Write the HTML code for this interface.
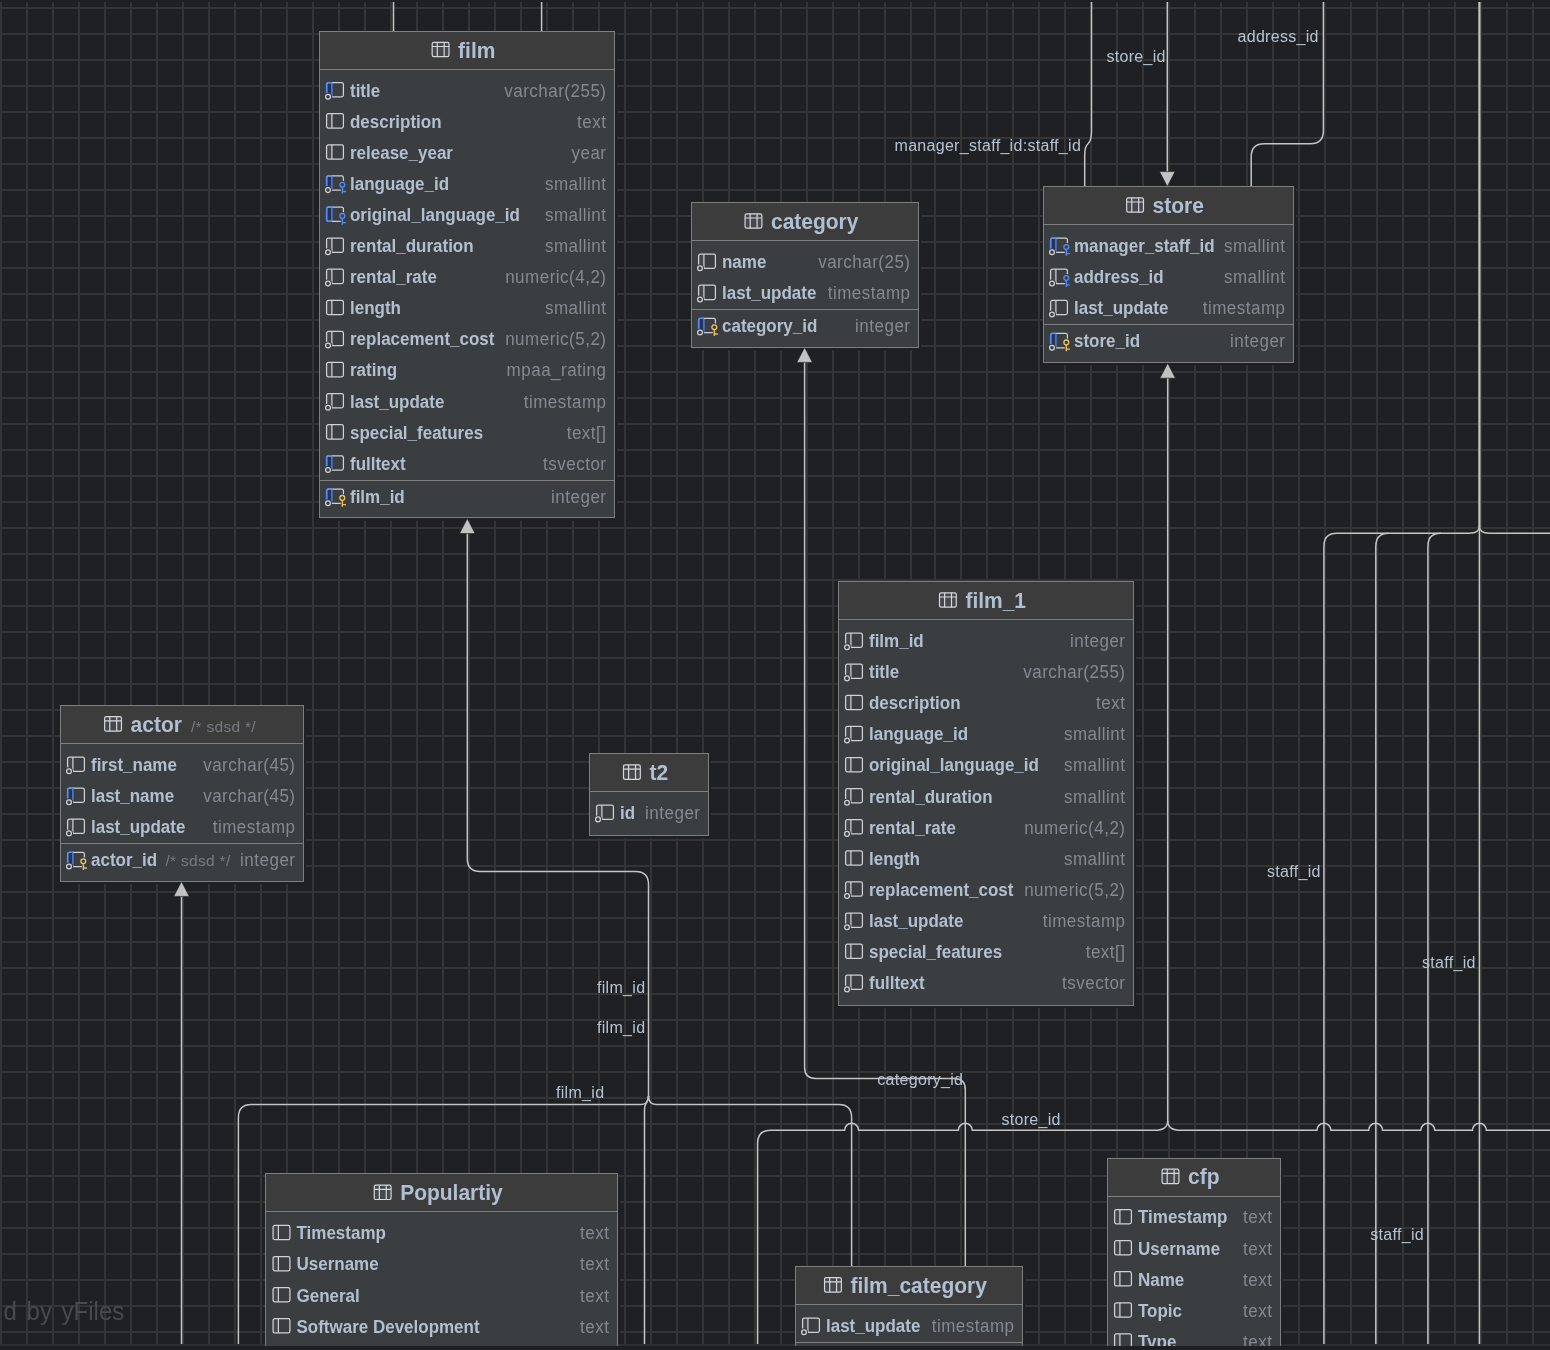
<!DOCTYPE html><html><head><meta charset="utf-8"><style>html,body{margin:0;padding:0;width:1550px;height:1350px;overflow:hidden;background:#1e1f22;}svg{position:absolute;left:0;top:0;display:block;will-change:transform}text{font-family:"Liberation Sans",sans-serif;}.nm{font-weight:bold;font-size:17px;fill:#b3bfcf}.ty{font-size:17px;fill:#858990;letter-spacing:0.5px}.ti{font-weight:bold;font-size:21px;fill:#b0c0d2}.cm{font-size:15.5px;fill:#777b81;letter-spacing:0.3px}.lb{font-size:16px;fill:#b7c2d0;letter-spacing:0.3px}.wm{font-size:24px;fill:#4a4a4c;letter-spacing:0px}</style></head><body>
<svg width="1550" height="1350" viewBox="0 0 1550 1350">
<defs>
<clipPath id="cv"><rect x="0" y="0" width="1550" height="1344"/></clipPath>
<clipPath id="cv2"><rect x="0" y="0" width="1550" height="1346"/></clipPath>
</defs>
<rect x="0" y="0" width="1550" height="1350" fill="#1e1f22"/>
<rect x="0" y="0" width="1550" height="1344" fill="#1f2023"/>
<rect x="0" y="1344" width="1550" height="2" fill="#2b2d30"/>
<g clip-path="url(#cv)">
<g fill="#343435"><rect x="0" y="2" width="2" height="1342"/><rect x="26" y="2" width="2" height="1342"/><rect x="52" y="2" width="2" height="1342"/><rect x="78" y="2" width="2" height="1342"/><rect x="104" y="2" width="2" height="1342"/><rect x="130" y="2" width="2" height="1342"/><rect x="156" y="2" width="2" height="1342"/><rect x="182" y="2" width="2" height="1342"/><rect x="208" y="2" width="2" height="1342"/><rect x="234" y="2" width="2" height="1342"/><rect x="260" y="2" width="2" height="1342"/><rect x="286" y="2" width="2" height="1342"/><rect x="312" y="2" width="2" height="1342"/><rect x="338" y="2" width="2" height="1342"/><rect x="364" y="2" width="2" height="1342"/><rect x="390" y="2" width="2" height="1342"/><rect x="416" y="2" width="2" height="1342"/><rect x="442" y="2" width="2" height="1342"/><rect x="468" y="2" width="2" height="1342"/><rect x="494" y="2" width="2" height="1342"/><rect x="520" y="2" width="2" height="1342"/><rect x="546" y="2" width="2" height="1342"/><rect x="572" y="2" width="2" height="1342"/><rect x="598" y="2" width="2" height="1342"/><rect x="624" y="2" width="2" height="1342"/><rect x="650" y="2" width="2" height="1342"/><rect x="676" y="2" width="2" height="1342"/><rect x="702" y="2" width="2" height="1342"/><rect x="728" y="2" width="2" height="1342"/><rect x="754" y="2" width="2" height="1342"/><rect x="780" y="2" width="2" height="1342"/><rect x="806" y="2" width="2" height="1342"/><rect x="832" y="2" width="2" height="1342"/><rect x="858" y="2" width="2" height="1342"/><rect x="884" y="2" width="2" height="1342"/><rect x="910" y="2" width="2" height="1342"/><rect x="934" y="2" width="2" height="1342"/><rect x="960" y="2" width="2" height="1342"/><rect x="986" y="2" width="2" height="1342"/><rect x="1012" y="2" width="2" height="1342"/><rect x="1038" y="2" width="2" height="1342"/><rect x="1064" y="2" width="2" height="1342"/><rect x="1090" y="2" width="2" height="1342"/><rect x="1116" y="2" width="2" height="1342"/><rect x="1142" y="2" width="2" height="1342"/><rect x="1168" y="2" width="2" height="1342"/><rect x="1194" y="2" width="2" height="1342"/><rect x="1220" y="2" width="2" height="1342"/><rect x="1246" y="2" width="2" height="1342"/><rect x="1272" y="2" width="2" height="1342"/><rect x="1298" y="2" width="2" height="1342"/><rect x="1324" y="2" width="2" height="1342"/><rect x="1350" y="2" width="2" height="1342"/><rect x="1376" y="2" width="2" height="1342"/><rect x="1402" y="2" width="2" height="1342"/><rect x="1428" y="2" width="2" height="1342"/><rect x="1454" y="2" width="2" height="1342"/><rect x="1480" y="2" width="2" height="1342"/><rect x="1506" y="2" width="2" height="1342"/><rect x="1532" y="2" width="2" height="1342"/><rect x="0" y="7" width="1550" height="2"/><rect x="0" y="33" width="1550" height="2"/><rect x="0" y="59" width="1550" height="2"/><rect x="0" y="85" width="1550" height="2"/><rect x="0" y="111" width="1550" height="2"/><rect x="0" y="137" width="1550" height="2"/><rect x="0" y="163" width="1550" height="2"/><rect x="0" y="189" width="1550" height="2"/><rect x="0" y="215" width="1550" height="2"/><rect x="0" y="241" width="1550" height="2"/><rect x="0" y="267" width="1550" height="2"/><rect x="0" y="293" width="1550" height="2"/><rect x="0" y="319" width="1550" height="2"/><rect x="0" y="345" width="1550" height="2"/><rect x="0" y="371" width="1550" height="2"/><rect x="0" y="397" width="1550" height="2"/><rect x="0" y="423" width="1550" height="2"/><rect x="0" y="449" width="1550" height="2"/><rect x="0" y="475" width="1550" height="2"/><rect x="0" y="501" width="1550" height="2"/><rect x="0" y="527" width="1550" height="2"/><rect x="0" y="553" width="1550" height="2"/><rect x="0" y="579" width="1550" height="2"/><rect x="0" y="605" width="1550" height="2"/><rect x="0" y="631" width="1550" height="2"/><rect x="0" y="657" width="1550" height="2"/><rect x="0" y="683" width="1550" height="2"/><rect x="0" y="709" width="1550" height="2"/><rect x="0" y="735" width="1550" height="2"/><rect x="0" y="761" width="1550" height="2"/><rect x="0" y="787" width="1550" height="2"/><rect x="0" y="813" width="1550" height="2"/><rect x="0" y="839" width="1550" height="2"/><rect x="0" y="865" width="1550" height="2"/><rect x="0" y="891" width="1550" height="2"/><rect x="0" y="917" width="1550" height="2"/><rect x="0" y="941" width="1550" height="2"/><rect x="0" y="967" width="1550" height="2"/><rect x="0" y="993" width="1550" height="2"/><rect x="0" y="1019" width="1550" height="2"/><rect x="0" y="1045" width="1550" height="2"/><rect x="0" y="1071" width="1550" height="2"/><rect x="0" y="1097" width="1550" height="2"/><rect x="0" y="1123" width="1550" height="2"/><rect x="0" y="1149" width="1550" height="2"/><rect x="0" y="1175" width="1550" height="2"/><rect x="0" y="1201" width="1550" height="2"/><rect x="0" y="1227" width="1550" height="2"/><rect x="0" y="1253" width="1550" height="2"/><rect x="0" y="1279" width="1550" height="2"/><rect x="0" y="1305" width="1550" height="2"/><rect x="0" y="1331" width="1550" height="2"/></g>
<rect x="322.0" y="34.0" width="295.0" height="486.8" fill="#1f2023"/>
<rect x="694.0" y="205.5" width="227.0" height="144.7" fill="#1f2023"/>
<rect x="1046.0" y="189.5" width="250.0" height="175.8" fill="#1f2023"/>
<rect x="841.0" y="584.5" width="295.0" height="423.6" fill="#1f2023"/>
<rect x="63.0" y="708.4" width="243.0" height="175.8" fill="#1f2023"/>
<rect x="592.0" y="756.6" width="119.0" height="81.5" fill="#1f2023"/>
<rect x="268.5" y="1176.8" width="351.5" height="174.8" fill="#1f2023"/>
<rect x="798.0" y="1269.4" width="227.0" height="113.6" fill="#1f2023"/>
<rect x="1110.0" y="1160.9" width="173.0" height="205.9" fill="#1f2023"/>
<g><path d="M393.5 2 V31.5" fill="none" stroke="#c4c4c4" stroke-width="1.5"/><path d="M541.6 2 V31.5" fill="none" stroke="#c4c4c4" stroke-width="1.5"/><path d="M467.3 533 V858.4 Q467.3 871.4 480.3 871.4 H635.5 Q648.5 871.4 648.5 884.4 V1097" fill="none" stroke="#c4c4c4" stroke-width="1.5"/><path d="M648.5 1096 C648.5 1101.5 646 1104.4 641.5 1104.4 H251.4 Q238.4 1104.4 238.4 1117.4 V1344" fill="none" stroke="#c4c4c4" stroke-width="1.5"/><path d="M648.5 1096 C648.5 1101.5 651.6 1104.4 656.1 1104.4 H838.6 Q851.6 1104.4 851.6 1117.4 V1266.5" fill="none" stroke="#c4c4c4" stroke-width="1.5"/><path d="M648.5 1096 C648.5 1101.5 644.5 1103.5 644.5 1109 V1344" fill="none" stroke="#c4c4c4" stroke-width="1.5"/><path d="M467.30 518.60 L459.50 533.60 L475.10 533.60 Z" fill="#c2c2c2" stroke="#18191b" stroke-width="0.6"/><path d="M181.5 896 V1344" fill="none" stroke="#c4c4c4" stroke-width="1.5"/><path d="M181.50 881.40 L173.70 896.40 L189.30 896.40 Z" fill="#c2c2c2" stroke="#18191b" stroke-width="0.6"/><path d="M804.6 361.5 V1067.5 Q804.6 1078.5 815.6 1078.5 H954.3 Q965.3 1078.5 965.3 1089.5 V1266.5" fill="none" stroke="#c4c4c4" stroke-width="1.5"/><path d="M804.60 347.40 L796.80 362.40 L812.40 362.40 Z" fill="#c2c2c2" stroke="#18191b" stroke-width="0.6"/><path d="M1091.5 2 V131 C1091.5 139 1090.5 141.5 1088.2 143.5 C1085.6 145.6 1084.7 148 1084.7 155 V186.5" fill="none" stroke="#c4c4c4" stroke-width="1.5"/><path d="M1167.3 2 V172" fill="none" stroke="#c4c4c4" stroke-width="1.5"/><path d="M1167.30 186.60 L1159.50 171.60 L1175.10 171.60 Z" fill="#c2c2c2" stroke="#18191b" stroke-width="0.6"/><path d="M1323.4 2 V130.7 Q1323.4 143.7 1310.4 143.7 H1264.2 Q1251.2 143.7 1251.2 156.7 V186.5" fill="none" stroke="#c4c4c4" stroke-width="1.5"/><path d="M1167.7 377 V1122" fill="none" stroke="#c4c4c4" stroke-width="1.5"/><path d="M1167.7 1121 C1167.7 1127.5 1162 1130.3 1154.5 1130.3 H972.30 A7 7 0 0 0 958.30 1130.30 H858.60 A7 7 0 0 0 844.60 1130.30 H770.6 Q757.6 1130.3 757.6 1143.3 V1344" fill="none" stroke="#c4c4c4" stroke-width="1.5"/><path d="M1167.7 1121 C1167.7 1127.5 1173.4 1130.3 1180.9 1130.3 H1316.90 A7 7 0 0 1 1330.90 1130.30 H1368.60 A7 7 0 0 1 1382.60 1130.30 H1420.80 A7 7 0 0 1 1434.80 1130.30 H1472.40 A7 7 0 0 1 1486.40 1130.30 H1552" fill="none" stroke="#c4c4c4" stroke-width="1.5"/><path d="M1167.70 363.20 L1159.90 378.20 L1175.50 378.20 Z" fill="#c2c2c2" stroke="#18191b" stroke-width="0.6"/><path d="M1479.4 2 V527" fill="none" stroke="#c4c4c4" stroke-width="2.2"/><path d="M1479.4 526 C1479.4 531 1476 533.2 1469.5 533.2 H1336.9 Q1323.9 533.2 1323.9 546.2 V1344" fill="none" stroke="#c4c4c4" stroke-width="1.5"/><path d="M1388.8 533.2 Q1375.8 533.2 1375.8 546.2 V1344" fill="none" stroke="#c4c4c4" stroke-width="1.5"/><path d="M1440.9 533.2 Q1427.9 533.2 1427.9 546.2 V1344" fill="none" stroke="#c4c4c4" stroke-width="1.5"/><path d="M1479.4 526 C1479.4 531 1482.8 533.2 1489.3 533.2 H1552" fill="none" stroke="#c4c4c4" stroke-width="1.5"/><path d="M1479.4 526 V1344" fill="none" stroke="#c4c4c4" stroke-width="1.5"/></g>
</g><g clip-path="url(#cv2)"><rect x="319.00" y="31.00" width="295.00" height="486.80" fill="#3b3e41"/><rect x="319.00" y="31.00" width="295.00" height="38.00" fill="#3c3c3d"/><rect x="319.5" y="31.5" width="295" height="486" fill="none" stroke="#7e7e7e" stroke-width="1"/><path d="M319 69.5 H614" stroke="#7e7e7e" stroke-width="1"/><path d="M319 480.5 H614" stroke="#7e7e7e" stroke-width="1"/><g transform="translate(431.58 41.70)"><rect x="0.6" y="0.6" width="16.8" height="14.4" rx="1.6" fill="#46484c" stroke="#d6d7dc" stroke-width="1.2"/><path d="M0.6 4.8 H17.4 M5.7 0.6 V15 M12.6 0.6 V15" stroke="#d6d7dc" stroke-width="1.2"/></g><text class="ti" transform="translate(458.08 57.50) scale(1 1.04)">film</text><g transform="translate(326.00 82.00)"><rect x="0.8" y="0.8" width="4.9" height="13.8" fill="#243358"/><rect x="0.6" y="0.6" width="16.8" height="14.3" rx="1.8" fill="none" stroke="#d0d1d4" stroke-width="1.25"/><path d="M5.9 0.6 V14.9" stroke="#548cf8" stroke-width="1.25"/><path d="M5.9 0.6 H2.4 Q0.6 0.6 0.6 2.4 V13.1 Q0.6 14.9 2.4 14.9 H5.9" fill="none" stroke="#548cf8" stroke-width="1.4"/><circle cx="2" cy="14.8" r="2.6" fill="#3b3e41" stroke="#3b3e41" stroke-width="2.8"/><circle cx="2" cy="14.8" r="2.4" fill="none" stroke="#d0d1d4" stroke-width="1.25"/></g><text class="nm" transform="translate(350.00 96.50) scale(1 1.06)">title</text><text class="ty" text-anchor="end" transform="translate(606.50 96.50) scale(1 1.06)">varchar(255)</text><g transform="translate(326.00 113.10)"><rect x="0.8" y="0.8" width="4.9" height="13.8" fill="#45464a"/><rect x="0.6" y="0.6" width="16.8" height="14.3" rx="1.8" fill="none" stroke="#d0d1d4" stroke-width="1.25"/><path d="M5.9 0.6 V14.9" stroke="#d0d1d4" stroke-width="1.25"/></g><text class="nm" transform="translate(350.00 127.60) scale(1 1.06)">description</text><text class="ty" text-anchor="end" transform="translate(606.50 127.60) scale(1 1.06)">text</text><g transform="translate(326.00 144.20)"><rect x="0.8" y="0.8" width="4.9" height="13.8" fill="#45464a"/><rect x="0.6" y="0.6" width="16.8" height="14.3" rx="1.8" fill="none" stroke="#d0d1d4" stroke-width="1.25"/><path d="M5.9 0.6 V14.9" stroke="#d0d1d4" stroke-width="1.25"/></g><text class="nm" transform="translate(350.00 158.70) scale(1 1.06)">release_year</text><text class="ty" text-anchor="end" transform="translate(606.50 158.70) scale(1 1.06)">year</text><g transform="translate(326.00 175.30)"><rect x="0.8" y="0.8" width="4.9" height="13.8" fill="#243358"/><rect x="0.6" y="0.6" width="16.8" height="14.3" rx="1.8" fill="none" stroke="#d0d1d4" stroke-width="1.25"/><path d="M5.9 0.6 V14.9" stroke="#548cf8" stroke-width="1.25"/><path d="M5.9 0.6 H2.4 Q0.6 0.6 0.6 2.4 V13.1 Q0.6 14.9 2.4 14.9 H5.9" fill="none" stroke="#548cf8" stroke-width="1.4"/><g stroke="#3b3e41" stroke-width="3" fill="#3b3e41"><circle cx="16.3" cy="9.5" r="2.5"/><path d="M16.3 12 V18.3 M16.3 16.2 H19.9"/></g><g stroke="#548cf8" stroke-width="1.3" fill="none"><circle cx="16.3" cy="9.5" r="2.4"/><path d="M16.3 11.9 V18.3 M16.3 16.2 H19.9"/></g><circle cx="2" cy="14.8" r="2.6" fill="#3b3e41" stroke="#3b3e41" stroke-width="2.8"/><circle cx="2" cy="14.8" r="2.4" fill="none" stroke="#d0d1d4" stroke-width="1.25"/></g><text class="nm" transform="translate(350.00 189.80) scale(1 1.06)">language_id</text><text class="ty" text-anchor="end" transform="translate(606.50 189.80) scale(1 1.06)">smallint</text><g transform="translate(326.00 206.40)"><rect x="0.8" y="0.8" width="4.9" height="13.8" fill="#243358"/><rect x="0.6" y="0.6" width="16.8" height="14.3" rx="1.8" fill="none" stroke="#d0d1d4" stroke-width="1.25"/><path d="M5.9 0.6 V14.9" stroke="#548cf8" stroke-width="1.25"/><path d="M5.9 0.6 H2.4 Q0.6 0.6 0.6 2.4 V13.1 Q0.6 14.9 2.4 14.9 H5.9" fill="none" stroke="#548cf8" stroke-width="1.4"/><g stroke="#3b3e41" stroke-width="3" fill="#3b3e41"><circle cx="16.3" cy="9.5" r="2.5"/><path d="M16.3 12 V18.3 M16.3 16.2 H19.9"/></g><g stroke="#548cf8" stroke-width="1.3" fill="none"><circle cx="16.3" cy="9.5" r="2.4"/><path d="M16.3 11.9 V18.3 M16.3 16.2 H19.9"/></g></g><text class="nm" transform="translate(350.00 220.90) scale(1 1.06)">original_language_id</text><text class="ty" text-anchor="end" transform="translate(606.50 220.90) scale(1 1.06)">smallint</text><g transform="translate(326.00 237.50)"><rect x="0.8" y="0.8" width="4.9" height="13.8" fill="#45464a"/><rect x="0.6" y="0.6" width="16.8" height="14.3" rx="1.8" fill="none" stroke="#d0d1d4" stroke-width="1.25"/><path d="M5.9 0.6 V14.9" stroke="#d0d1d4" stroke-width="1.25"/><circle cx="2" cy="14.8" r="2.6" fill="#3b3e41" stroke="#3b3e41" stroke-width="2.8"/><circle cx="2" cy="14.8" r="2.4" fill="none" stroke="#d0d1d4" stroke-width="1.25"/></g><text class="nm" transform="translate(350.00 252.00) scale(1 1.06)">rental_duration</text><text class="ty" text-anchor="end" transform="translate(606.50 252.00) scale(1 1.06)">smallint</text><g transform="translate(326.00 268.60)"><rect x="0.8" y="0.8" width="4.9" height="13.8" fill="#45464a"/><rect x="0.6" y="0.6" width="16.8" height="14.3" rx="1.8" fill="none" stroke="#d0d1d4" stroke-width="1.25"/><path d="M5.9 0.6 V14.9" stroke="#d0d1d4" stroke-width="1.25"/><circle cx="2" cy="14.8" r="2.6" fill="#3b3e41" stroke="#3b3e41" stroke-width="2.8"/><circle cx="2" cy="14.8" r="2.4" fill="none" stroke="#d0d1d4" stroke-width="1.25"/></g><text class="nm" transform="translate(350.00 283.10) scale(1 1.06)">rental_rate</text><text class="ty" text-anchor="end" transform="translate(606.50 283.10) scale(1 1.06)">numeric(4,2)</text><g transform="translate(326.00 299.70)"><rect x="0.8" y="0.8" width="4.9" height="13.8" fill="#45464a"/><rect x="0.6" y="0.6" width="16.8" height="14.3" rx="1.8" fill="none" stroke="#d0d1d4" stroke-width="1.25"/><path d="M5.9 0.6 V14.9" stroke="#d0d1d4" stroke-width="1.25"/></g><text class="nm" transform="translate(350.00 314.20) scale(1 1.06)">length</text><text class="ty" text-anchor="end" transform="translate(606.50 314.20) scale(1 1.06)">smallint</text><g transform="translate(326.00 330.80)"><rect x="0.8" y="0.8" width="4.9" height="13.8" fill="#45464a"/><rect x="0.6" y="0.6" width="16.8" height="14.3" rx="1.8" fill="none" stroke="#d0d1d4" stroke-width="1.25"/><path d="M5.9 0.6 V14.9" stroke="#d0d1d4" stroke-width="1.25"/><circle cx="2" cy="14.8" r="2.6" fill="#3b3e41" stroke="#3b3e41" stroke-width="2.8"/><circle cx="2" cy="14.8" r="2.4" fill="none" stroke="#d0d1d4" stroke-width="1.25"/></g><text class="nm" transform="translate(350.00 345.30) scale(1 1.06)">replacement_cost</text><text class="ty" text-anchor="end" transform="translate(606.50 345.30) scale(1 1.06)">numeric(5,2)</text><g transform="translate(326.00 361.90)"><rect x="0.8" y="0.8" width="4.9" height="13.8" fill="#45464a"/><rect x="0.6" y="0.6" width="16.8" height="14.3" rx="1.8" fill="none" stroke="#d0d1d4" stroke-width="1.25"/><path d="M5.9 0.6 V14.9" stroke="#d0d1d4" stroke-width="1.25"/></g><text class="nm" transform="translate(350.00 376.40) scale(1 1.06)">rating</text><text class="ty" text-anchor="end" transform="translate(606.50 376.40) scale(1 1.06)">mpaa_rating</text><g transform="translate(326.00 393.00)"><rect x="0.8" y="0.8" width="4.9" height="13.8" fill="#45464a"/><rect x="0.6" y="0.6" width="16.8" height="14.3" rx="1.8" fill="none" stroke="#d0d1d4" stroke-width="1.25"/><path d="M5.9 0.6 V14.9" stroke="#d0d1d4" stroke-width="1.25"/><circle cx="2" cy="14.8" r="2.6" fill="#3b3e41" stroke="#3b3e41" stroke-width="2.8"/><circle cx="2" cy="14.8" r="2.4" fill="none" stroke="#d0d1d4" stroke-width="1.25"/></g><text class="nm" transform="translate(350.00 407.50) scale(1 1.06)">last_update</text><text class="ty" text-anchor="end" transform="translate(606.50 407.50) scale(1 1.06)">timestamp</text><g transform="translate(326.00 424.10)"><rect x="0.8" y="0.8" width="4.9" height="13.8" fill="#45464a"/><rect x="0.6" y="0.6" width="16.8" height="14.3" rx="1.8" fill="none" stroke="#d0d1d4" stroke-width="1.25"/><path d="M5.9 0.6 V14.9" stroke="#d0d1d4" stroke-width="1.25"/></g><text class="nm" transform="translate(350.00 438.60) scale(1 1.06)">special_features</text><text class="ty" text-anchor="end" transform="translate(606.50 438.60) scale(1 1.06)">text[]</text><g transform="translate(326.00 455.20)"><rect x="0.8" y="0.8" width="4.9" height="13.8" fill="#243358"/><rect x="0.6" y="0.6" width="16.8" height="14.3" rx="1.8" fill="none" stroke="#d0d1d4" stroke-width="1.25"/><path d="M5.9 0.6 V14.9" stroke="#548cf8" stroke-width="1.25"/><path d="M5.9 0.6 H2.4 Q0.6 0.6 0.6 2.4 V13.1 Q0.6 14.9 2.4 14.9 H5.9" fill="none" stroke="#548cf8" stroke-width="1.4"/><circle cx="2" cy="14.8" r="2.6" fill="#3b3e41" stroke="#3b3e41" stroke-width="2.8"/><circle cx="2" cy="14.8" r="2.4" fill="none" stroke="#d0d1d4" stroke-width="1.25"/></g><text class="nm" transform="translate(350.00 469.70) scale(1 1.06)">fulltext</text><text class="ty" text-anchor="end" transform="translate(606.50 469.70) scale(1 1.06)">tsvector</text><g transform="translate(326.00 488.40)"><rect x="0.8" y="0.8" width="4.9" height="13.8" fill="#243358"/><rect x="0.6" y="0.6" width="16.8" height="14.3" rx="1.8" fill="none" stroke="#d0d1d4" stroke-width="1.25"/><path d="M5.9 0.6 V14.9" stroke="#548cf8" stroke-width="1.25"/><path d="M5.9 0.6 H2.4 Q0.6 0.6 0.6 2.4 V13.1 Q0.6 14.9 2.4 14.9 H5.9" fill="none" stroke="#548cf8" stroke-width="1.4"/><g stroke="#3b3e41" stroke-width="3" fill="#3b3e41"><circle cx="16.3" cy="9.5" r="2.5"/><path d="M16.3 12 V18.3 M16.3 16.2 H19.9"/></g><g stroke="#f1c45a" stroke-width="1.3" fill="none"><circle cx="16.3" cy="9.5" r="2.4"/><path d="M16.3 11.9 V18.3 M16.3 16.2 H19.9"/></g><circle cx="2" cy="14.8" r="2.6" fill="#3b3e41" stroke="#3b3e41" stroke-width="2.8"/><circle cx="2" cy="14.8" r="2.4" fill="none" stroke="#d0d1d4" stroke-width="1.25"/></g><text class="nm" transform="translate(350.00 502.90) scale(1 1.06)">film_id</text><text class="ty" text-anchor="end" transform="translate(606.50 502.90) scale(1 1.06)">integer</text><rect x="691.00" y="202.50" width="227.00" height="144.70" fill="#3b3e41"/><rect x="691.00" y="202.50" width="227.00" height="38.00" fill="#3c3c3d"/><rect x="691.5" y="202.5" width="227" height="145" fill="none" stroke="#7e7e7e" stroke-width="1"/><path d="M691 240.5 H918" stroke="#7e7e7e" stroke-width="1"/><path d="M691 309.5 H918" stroke="#7e7e7e" stroke-width="1"/><g transform="translate(744.48 213.20)"><rect x="0.6" y="0.6" width="16.8" height="14.4" rx="1.6" fill="#46484c" stroke="#d6d7dc" stroke-width="1.2"/><path d="M0.6 4.8 H17.4 M5.7 0.6 V15 M12.6 0.6 V15" stroke="#d6d7dc" stroke-width="1.2"/></g><text class="ti" transform="translate(770.98 229.00) scale(1 1.04)">category</text><g transform="translate(698.00 253.50)"><rect x="0.8" y="0.8" width="4.9" height="13.8" fill="#45464a"/><rect x="0.6" y="0.6" width="16.8" height="14.3" rx="1.8" fill="none" stroke="#d0d1d4" stroke-width="1.25"/><path d="M5.9 0.6 V14.9" stroke="#d0d1d4" stroke-width="1.25"/><circle cx="2" cy="14.8" r="2.6" fill="#3b3e41" stroke="#3b3e41" stroke-width="2.8"/><circle cx="2" cy="14.8" r="2.4" fill="none" stroke="#d0d1d4" stroke-width="1.25"/></g><text class="nm" transform="translate(722.00 268.00) scale(1 1.06)">name</text><text class="ty" text-anchor="end" transform="translate(910.50 268.00) scale(1 1.06)">varchar(25)</text><g transform="translate(698.00 284.60)"><rect x="0.8" y="0.8" width="4.9" height="13.8" fill="#45464a"/><rect x="0.6" y="0.6" width="16.8" height="14.3" rx="1.8" fill="none" stroke="#d0d1d4" stroke-width="1.25"/><path d="M5.9 0.6 V14.9" stroke="#d0d1d4" stroke-width="1.25"/><circle cx="2" cy="14.8" r="2.6" fill="#3b3e41" stroke="#3b3e41" stroke-width="2.8"/><circle cx="2" cy="14.8" r="2.4" fill="none" stroke="#d0d1d4" stroke-width="1.25"/></g><text class="nm" transform="translate(722.00 299.10) scale(1 1.06)">last_update</text><text class="ty" text-anchor="end" transform="translate(910.50 299.10) scale(1 1.06)">timestamp</text><g transform="translate(698.00 317.80)"><rect x="0.8" y="0.8" width="4.9" height="13.8" fill="#243358"/><rect x="0.6" y="0.6" width="16.8" height="14.3" rx="1.8" fill="none" stroke="#d0d1d4" stroke-width="1.25"/><path d="M5.9 0.6 V14.9" stroke="#548cf8" stroke-width="1.25"/><path d="M5.9 0.6 H2.4 Q0.6 0.6 0.6 2.4 V13.1 Q0.6 14.9 2.4 14.9 H5.9" fill="none" stroke="#548cf8" stroke-width="1.4"/><g stroke="#3b3e41" stroke-width="3" fill="#3b3e41"><circle cx="16.3" cy="9.5" r="2.5"/><path d="M16.3 12 V18.3 M16.3 16.2 H19.9"/></g><g stroke="#f1c45a" stroke-width="1.3" fill="none"><circle cx="16.3" cy="9.5" r="2.4"/><path d="M16.3 11.9 V18.3 M16.3 16.2 H19.9"/></g><circle cx="2" cy="14.8" r="2.6" fill="#3b3e41" stroke="#3b3e41" stroke-width="2.8"/><circle cx="2" cy="14.8" r="2.4" fill="none" stroke="#d0d1d4" stroke-width="1.25"/></g><text class="nm" transform="translate(722.00 332.30) scale(1 1.06)">category_id</text><text class="ty" text-anchor="end" transform="translate(910.50 332.30) scale(1 1.06)">integer</text><rect x="1043.00" y="186.50" width="250.00" height="175.80" fill="#3b3e41"/><rect x="1043.00" y="186.50" width="250.00" height="38.00" fill="#3c3c3d"/><rect x="1043.5" y="186.5" width="250" height="176" fill="none" stroke="#7e7e7e" stroke-width="1"/><path d="M1043 224.5 H1293" stroke="#7e7e7e" stroke-width="1"/><path d="M1043 324.5 H1293" stroke="#7e7e7e" stroke-width="1"/><g transform="translate(1126.07 197.20)"><rect x="0.6" y="0.6" width="16.8" height="14.4" rx="1.6" fill="#46484c" stroke="#d6d7dc" stroke-width="1.2"/><path d="M0.6 4.8 H17.4 M5.7 0.6 V15 M12.6 0.6 V15" stroke="#d6d7dc" stroke-width="1.2"/></g><text class="ti" transform="translate(1152.57 213.00) scale(1 1.04)">store</text><g transform="translate(1050.00 237.50)"><rect x="0.8" y="0.8" width="4.9" height="13.8" fill="#243358"/><rect x="0.6" y="0.6" width="16.8" height="14.3" rx="1.8" fill="none" stroke="#d0d1d4" stroke-width="1.25"/><path d="M5.9 0.6 V14.9" stroke="#548cf8" stroke-width="1.25"/><path d="M5.9 0.6 H2.4 Q0.6 0.6 0.6 2.4 V13.1 Q0.6 14.9 2.4 14.9 H5.9" fill="none" stroke="#548cf8" stroke-width="1.4"/><g stroke="#3b3e41" stroke-width="3" fill="#3b3e41"><circle cx="16.3" cy="9.5" r="2.5"/><path d="M16.3 12 V18.3 M16.3 16.2 H19.9"/></g><g stroke="#548cf8" stroke-width="1.3" fill="none"><circle cx="16.3" cy="9.5" r="2.4"/><path d="M16.3 11.9 V18.3 M16.3 16.2 H19.9"/></g><circle cx="2" cy="14.8" r="2.6" fill="#3b3e41" stroke="#3b3e41" stroke-width="2.8"/><circle cx="2" cy="14.8" r="2.4" fill="none" stroke="#d0d1d4" stroke-width="1.25"/></g><text class="nm" transform="translate(1074.00 252.00) scale(1 1.06)">manager_staff_id</text><text class="ty" text-anchor="end" transform="translate(1285.50 252.00) scale(1 1.06)">smallint</text><g transform="translate(1050.00 268.60)"><rect x="0.8" y="0.8" width="4.9" height="13.8" fill="#45464a"/><rect x="0.6" y="0.6" width="16.8" height="14.3" rx="1.8" fill="none" stroke="#d0d1d4" stroke-width="1.25"/><path d="M5.9 0.6 V14.9" stroke="#d0d1d4" stroke-width="1.25"/><g stroke="#3b3e41" stroke-width="3" fill="#3b3e41"><circle cx="16.3" cy="9.5" r="2.5"/><path d="M16.3 12 V18.3 M16.3 16.2 H19.9"/></g><g stroke="#548cf8" stroke-width="1.3" fill="none"><circle cx="16.3" cy="9.5" r="2.4"/><path d="M16.3 11.9 V18.3 M16.3 16.2 H19.9"/></g><circle cx="2" cy="14.8" r="2.6" fill="#3b3e41" stroke="#3b3e41" stroke-width="2.8"/><circle cx="2" cy="14.8" r="2.4" fill="none" stroke="#d0d1d4" stroke-width="1.25"/></g><text class="nm" transform="translate(1074.00 283.10) scale(1 1.06)">address_id</text><text class="ty" text-anchor="end" transform="translate(1285.50 283.10) scale(1 1.06)">smallint</text><g transform="translate(1050.00 299.70)"><rect x="0.8" y="0.8" width="4.9" height="13.8" fill="#45464a"/><rect x="0.6" y="0.6" width="16.8" height="14.3" rx="1.8" fill="none" stroke="#d0d1d4" stroke-width="1.25"/><path d="M5.9 0.6 V14.9" stroke="#d0d1d4" stroke-width="1.25"/><circle cx="2" cy="14.8" r="2.6" fill="#3b3e41" stroke="#3b3e41" stroke-width="2.8"/><circle cx="2" cy="14.8" r="2.4" fill="none" stroke="#d0d1d4" stroke-width="1.25"/></g><text class="nm" transform="translate(1074.00 314.20) scale(1 1.06)">last_update</text><text class="ty" text-anchor="end" transform="translate(1285.50 314.20) scale(1 1.06)">timestamp</text><g transform="translate(1050.00 332.90)"><rect x="0.8" y="0.8" width="4.9" height="13.8" fill="#243358"/><rect x="0.6" y="0.6" width="16.8" height="14.3" rx="1.8" fill="none" stroke="#d0d1d4" stroke-width="1.25"/><path d="M5.9 0.6 V14.9" stroke="#548cf8" stroke-width="1.25"/><path d="M5.9 0.6 H2.4 Q0.6 0.6 0.6 2.4 V13.1 Q0.6 14.9 2.4 14.9 H5.9" fill="none" stroke="#548cf8" stroke-width="1.4"/><g stroke="#3b3e41" stroke-width="3" fill="#3b3e41"><circle cx="16.3" cy="9.5" r="2.5"/><path d="M16.3 12 V18.3 M16.3 16.2 H19.9"/></g><g stroke="#f1c45a" stroke-width="1.3" fill="none"><circle cx="16.3" cy="9.5" r="2.4"/><path d="M16.3 11.9 V18.3 M16.3 16.2 H19.9"/></g><circle cx="2" cy="14.8" r="2.6" fill="#3b3e41" stroke="#3b3e41" stroke-width="2.8"/><circle cx="2" cy="14.8" r="2.4" fill="none" stroke="#d0d1d4" stroke-width="1.25"/></g><text class="nm" transform="translate(1074.00 347.40) scale(1 1.06)">store_id</text><text class="ty" text-anchor="end" transform="translate(1285.50 347.40) scale(1 1.06)">integer</text><rect x="838.00" y="581.50" width="295.00" height="423.60" fill="#3b3e41"/><rect x="838.00" y="581.50" width="295.00" height="38.00" fill="#3c3c3d"/><rect x="838.5" y="581.5" width="295" height="424" fill="none" stroke="#7e7e7e" stroke-width="1"/><path d="M838 619.5 H1133" stroke="#7e7e7e" stroke-width="1"/><g transform="translate(938.90 592.20)"><rect x="0.6" y="0.6" width="16.8" height="14.4" rx="1.6" fill="#46484c" stroke="#d6d7dc" stroke-width="1.2"/><path d="M0.6 4.8 H17.4 M5.7 0.6 V15 M12.6 0.6 V15" stroke="#d6d7dc" stroke-width="1.2"/></g><text class="ti" transform="translate(965.40 608.00) scale(1 1.04)">film_1</text><g transform="translate(845.00 632.50)"><rect x="0.8" y="0.8" width="4.9" height="13.8" fill="#45464a"/><rect x="0.6" y="0.6" width="16.8" height="14.3" rx="1.8" fill="none" stroke="#d0d1d4" stroke-width="1.25"/><path d="M5.9 0.6 V14.9" stroke="#d0d1d4" stroke-width="1.25"/><circle cx="2" cy="14.8" r="2.6" fill="#3b3e41" stroke="#3b3e41" stroke-width="2.8"/><circle cx="2" cy="14.8" r="2.4" fill="none" stroke="#d0d1d4" stroke-width="1.25"/></g><text class="nm" transform="translate(869.00 647.00) scale(1 1.06)">film_id</text><text class="ty" text-anchor="end" transform="translate(1125.50 647.00) scale(1 1.06)">integer</text><g transform="translate(845.00 663.60)"><rect x="0.8" y="0.8" width="4.9" height="13.8" fill="#45464a"/><rect x="0.6" y="0.6" width="16.8" height="14.3" rx="1.8" fill="none" stroke="#d0d1d4" stroke-width="1.25"/><path d="M5.9 0.6 V14.9" stroke="#d0d1d4" stroke-width="1.25"/><circle cx="2" cy="14.8" r="2.6" fill="#3b3e41" stroke="#3b3e41" stroke-width="2.8"/><circle cx="2" cy="14.8" r="2.4" fill="none" stroke="#d0d1d4" stroke-width="1.25"/></g><text class="nm" transform="translate(869.00 678.10) scale(1 1.06)">title</text><text class="ty" text-anchor="end" transform="translate(1125.50 678.10) scale(1 1.06)">varchar(255)</text><g transform="translate(845.00 694.70)"><rect x="0.8" y="0.8" width="4.9" height="13.8" fill="#45464a"/><rect x="0.6" y="0.6" width="16.8" height="14.3" rx="1.8" fill="none" stroke="#d0d1d4" stroke-width="1.25"/><path d="M5.9 0.6 V14.9" stroke="#d0d1d4" stroke-width="1.25"/></g><text class="nm" transform="translate(869.00 709.20) scale(1 1.06)">description</text><text class="ty" text-anchor="end" transform="translate(1125.50 709.20) scale(1 1.06)">text</text><g transform="translate(845.00 725.80)"><rect x="0.8" y="0.8" width="4.9" height="13.8" fill="#45464a"/><rect x="0.6" y="0.6" width="16.8" height="14.3" rx="1.8" fill="none" stroke="#d0d1d4" stroke-width="1.25"/><path d="M5.9 0.6 V14.9" stroke="#d0d1d4" stroke-width="1.25"/><circle cx="2" cy="14.8" r="2.6" fill="#3b3e41" stroke="#3b3e41" stroke-width="2.8"/><circle cx="2" cy="14.8" r="2.4" fill="none" stroke="#d0d1d4" stroke-width="1.25"/></g><text class="nm" transform="translate(869.00 740.30) scale(1 1.06)">language_id</text><text class="ty" text-anchor="end" transform="translate(1125.50 740.30) scale(1 1.06)">smallint</text><g transform="translate(845.00 756.90)"><rect x="0.8" y="0.8" width="4.9" height="13.8" fill="#45464a"/><rect x="0.6" y="0.6" width="16.8" height="14.3" rx="1.8" fill="none" stroke="#d0d1d4" stroke-width="1.25"/><path d="M5.9 0.6 V14.9" stroke="#d0d1d4" stroke-width="1.25"/></g><text class="nm" transform="translate(869.00 771.40) scale(1 1.06)">original_language_id</text><text class="ty" text-anchor="end" transform="translate(1125.50 771.40) scale(1 1.06)">smallint</text><g transform="translate(845.00 788.00)"><rect x="0.8" y="0.8" width="4.9" height="13.8" fill="#45464a"/><rect x="0.6" y="0.6" width="16.8" height="14.3" rx="1.8" fill="none" stroke="#d0d1d4" stroke-width="1.25"/><path d="M5.9 0.6 V14.9" stroke="#d0d1d4" stroke-width="1.25"/><circle cx="2" cy="14.8" r="2.6" fill="#3b3e41" stroke="#3b3e41" stroke-width="2.8"/><circle cx="2" cy="14.8" r="2.4" fill="none" stroke="#d0d1d4" stroke-width="1.25"/></g><text class="nm" transform="translate(869.00 802.50) scale(1 1.06)">rental_duration</text><text class="ty" text-anchor="end" transform="translate(1125.50 802.50) scale(1 1.06)">smallint</text><g transform="translate(845.00 819.10)"><rect x="0.8" y="0.8" width="4.9" height="13.8" fill="#45464a"/><rect x="0.6" y="0.6" width="16.8" height="14.3" rx="1.8" fill="none" stroke="#d0d1d4" stroke-width="1.25"/><path d="M5.9 0.6 V14.9" stroke="#d0d1d4" stroke-width="1.25"/><circle cx="2" cy="14.8" r="2.6" fill="#3b3e41" stroke="#3b3e41" stroke-width="2.8"/><circle cx="2" cy="14.8" r="2.4" fill="none" stroke="#d0d1d4" stroke-width="1.25"/></g><text class="nm" transform="translate(869.00 833.60) scale(1 1.06)">rental_rate</text><text class="ty" text-anchor="end" transform="translate(1125.50 833.60) scale(1 1.06)">numeric(4,2)</text><g transform="translate(845.00 850.20)"><rect x="0.8" y="0.8" width="4.9" height="13.8" fill="#45464a"/><rect x="0.6" y="0.6" width="16.8" height="14.3" rx="1.8" fill="none" stroke="#d0d1d4" stroke-width="1.25"/><path d="M5.9 0.6 V14.9" stroke="#d0d1d4" stroke-width="1.25"/></g><text class="nm" transform="translate(869.00 864.70) scale(1 1.06)">length</text><text class="ty" text-anchor="end" transform="translate(1125.50 864.70) scale(1 1.06)">smallint</text><g transform="translate(845.00 881.30)"><rect x="0.8" y="0.8" width="4.9" height="13.8" fill="#45464a"/><rect x="0.6" y="0.6" width="16.8" height="14.3" rx="1.8" fill="none" stroke="#d0d1d4" stroke-width="1.25"/><path d="M5.9 0.6 V14.9" stroke="#d0d1d4" stroke-width="1.25"/><circle cx="2" cy="14.8" r="2.6" fill="#3b3e41" stroke="#3b3e41" stroke-width="2.8"/><circle cx="2" cy="14.8" r="2.4" fill="none" stroke="#d0d1d4" stroke-width="1.25"/></g><text class="nm" transform="translate(869.00 895.80) scale(1 1.06)">replacement_cost</text><text class="ty" text-anchor="end" transform="translate(1125.50 895.80) scale(1 1.06)">numeric(5,2)</text><g transform="translate(845.00 912.40)"><rect x="0.8" y="0.8" width="4.9" height="13.8" fill="#45464a"/><rect x="0.6" y="0.6" width="16.8" height="14.3" rx="1.8" fill="none" stroke="#d0d1d4" stroke-width="1.25"/><path d="M5.9 0.6 V14.9" stroke="#d0d1d4" stroke-width="1.25"/><circle cx="2" cy="14.8" r="2.6" fill="#3b3e41" stroke="#3b3e41" stroke-width="2.8"/><circle cx="2" cy="14.8" r="2.4" fill="none" stroke="#d0d1d4" stroke-width="1.25"/></g><text class="nm" transform="translate(869.00 926.90) scale(1 1.06)">last_update</text><text class="ty" text-anchor="end" transform="translate(1125.50 926.90) scale(1 1.06)">timestamp</text><g transform="translate(845.00 943.50)"><rect x="0.8" y="0.8" width="4.9" height="13.8" fill="#45464a"/><rect x="0.6" y="0.6" width="16.8" height="14.3" rx="1.8" fill="none" stroke="#d0d1d4" stroke-width="1.25"/><path d="M5.9 0.6 V14.9" stroke="#d0d1d4" stroke-width="1.25"/></g><text class="nm" transform="translate(869.00 958.00) scale(1 1.06)">special_features</text><text class="ty" text-anchor="end" transform="translate(1125.50 958.00) scale(1 1.06)">text[]</text><g transform="translate(845.00 974.60)"><rect x="0.8" y="0.8" width="4.9" height="13.8" fill="#45464a"/><rect x="0.6" y="0.6" width="16.8" height="14.3" rx="1.8" fill="none" stroke="#d0d1d4" stroke-width="1.25"/><path d="M5.9 0.6 V14.9" stroke="#d0d1d4" stroke-width="1.25"/><circle cx="2" cy="14.8" r="2.6" fill="#3b3e41" stroke="#3b3e41" stroke-width="2.8"/><circle cx="2" cy="14.8" r="2.4" fill="none" stroke="#d0d1d4" stroke-width="1.25"/></g><text class="nm" transform="translate(869.00 989.10) scale(1 1.06)">fulltext</text><text class="ty" text-anchor="end" transform="translate(1125.50 989.10) scale(1 1.06)">tsvector</text><rect x="60.00" y="705.40" width="243.00" height="175.80" fill="#3b3e41"/><rect x="60.00" y="705.40" width="243.00" height="38.00" fill="#3c3c3d"/><rect x="60.5" y="705.5" width="243" height="176" fill="none" stroke="#7e7e7e" stroke-width="1"/><path d="M60 743.5 H303" stroke="#7e7e7e" stroke-width="1"/><path d="M60 843.5 H303" stroke="#7e7e7e" stroke-width="1"/><g transform="translate(104.06 716.10)"><rect x="0.6" y="0.6" width="16.8" height="14.4" rx="1.6" fill="#46484c" stroke="#d6d7dc" stroke-width="1.2"/><path d="M0.6 4.8 H17.4 M5.7 0.6 V15 M12.6 0.6 V15" stroke="#d6d7dc" stroke-width="1.2"/></g><text class="ti" transform="translate(130.56 731.90) scale(1 1.04)">actor</text><text class="cm" x="190.91" y="731.90">/* sdsd */</text><g transform="translate(67.00 756.40)"><rect x="0.8" y="0.8" width="4.9" height="13.8" fill="#45464a"/><rect x="0.6" y="0.6" width="16.8" height="14.3" rx="1.8" fill="none" stroke="#d0d1d4" stroke-width="1.25"/><path d="M5.9 0.6 V14.9" stroke="#d0d1d4" stroke-width="1.25"/><circle cx="2" cy="14.8" r="2.6" fill="#3b3e41" stroke="#3b3e41" stroke-width="2.8"/><circle cx="2" cy="14.8" r="2.4" fill="none" stroke="#d0d1d4" stroke-width="1.25"/></g><text class="nm" transform="translate(91.00 770.90) scale(1 1.06)">first_name</text><text class="ty" text-anchor="end" transform="translate(295.50 770.90) scale(1 1.06)">varchar(45)</text><g transform="translate(67.00 787.50)"><rect x="0.8" y="0.8" width="4.9" height="13.8" fill="#243358"/><rect x="0.6" y="0.6" width="16.8" height="14.3" rx="1.8" fill="none" stroke="#d0d1d4" stroke-width="1.25"/><path d="M5.9 0.6 V14.9" stroke="#548cf8" stroke-width="1.25"/><path d="M5.9 0.6 H2.4 Q0.6 0.6 0.6 2.4 V13.1 Q0.6 14.9 2.4 14.9 H5.9" fill="none" stroke="#548cf8" stroke-width="1.4"/><circle cx="2" cy="14.8" r="2.6" fill="#3b3e41" stroke="#3b3e41" stroke-width="2.8"/><circle cx="2" cy="14.8" r="2.4" fill="none" stroke="#d0d1d4" stroke-width="1.25"/></g><text class="nm" transform="translate(91.00 802.00) scale(1 1.06)">last_name</text><text class="ty" text-anchor="end" transform="translate(295.50 802.00) scale(1 1.06)">varchar(45)</text><g transform="translate(67.00 818.60)"><rect x="0.8" y="0.8" width="4.9" height="13.8" fill="#45464a"/><rect x="0.6" y="0.6" width="16.8" height="14.3" rx="1.8" fill="none" stroke="#d0d1d4" stroke-width="1.25"/><path d="M5.9 0.6 V14.9" stroke="#d0d1d4" stroke-width="1.25"/><circle cx="2" cy="14.8" r="2.6" fill="#3b3e41" stroke="#3b3e41" stroke-width="2.8"/><circle cx="2" cy="14.8" r="2.4" fill="none" stroke="#d0d1d4" stroke-width="1.25"/></g><text class="nm" transform="translate(91.00 833.10) scale(1 1.06)">last_update</text><text class="ty" text-anchor="end" transform="translate(295.50 833.10) scale(1 1.06)">timestamp</text><g transform="translate(67.00 851.80)"><rect x="0.8" y="0.8" width="4.9" height="13.8" fill="#243358"/><rect x="0.6" y="0.6" width="16.8" height="14.3" rx="1.8" fill="none" stroke="#d0d1d4" stroke-width="1.25"/><path d="M5.9 0.6 V14.9" stroke="#548cf8" stroke-width="1.25"/><path d="M5.9 0.6 H2.4 Q0.6 0.6 0.6 2.4 V13.1 Q0.6 14.9 2.4 14.9 H5.9" fill="none" stroke="#548cf8" stroke-width="1.4"/><g stroke="#3b3e41" stroke-width="3" fill="#3b3e41"><circle cx="16.3" cy="9.5" r="2.5"/><path d="M16.3 12 V18.3 M16.3 16.2 H19.9"/></g><g stroke="#f1c45a" stroke-width="1.3" fill="none"><circle cx="16.3" cy="9.5" r="2.4"/><path d="M16.3 11.9 V18.3 M16.3 16.2 H19.9"/></g><circle cx="2" cy="14.8" r="2.6" fill="#3b3e41" stroke="#3b3e41" stroke-width="2.8"/><circle cx="2" cy="14.8" r="2.4" fill="none" stroke="#d0d1d4" stroke-width="1.25"/></g><text class="nm" transform="translate(91.00 866.30) scale(1 1.06)">actor_id</text><text class="cm" x="165.50" y="866.30">/* sdsd */</text><text class="ty" text-anchor="end" transform="translate(295.50 866.30) scale(1 1.06)">integer</text><rect x="589.00" y="753.60" width="119.00" height="81.50" fill="#3b3e41"/><rect x="589.00" y="753.60" width="119.00" height="38.00" fill="#3c3c3d"/><rect x="589.5" y="753.5" width="119" height="82" fill="none" stroke="#7e7e7e" stroke-width="1"/><path d="M589 791.5 H708" stroke="#7e7e7e" stroke-width="1"/><g transform="translate(622.91 764.30)"><rect x="0.6" y="0.6" width="16.8" height="14.4" rx="1.6" fill="#46484c" stroke="#d6d7dc" stroke-width="1.2"/><path d="M0.6 4.8 H17.4 M5.7 0.6 V15 M12.6 0.6 V15" stroke="#d6d7dc" stroke-width="1.2"/></g><text class="ti" transform="translate(649.41 780.10) scale(1 1.04)">t2</text><g transform="translate(596.00 804.60)"><rect x="0.8" y="0.8" width="4.9" height="13.8" fill="#45464a"/><rect x="0.6" y="0.6" width="16.8" height="14.3" rx="1.8" fill="none" stroke="#d0d1d4" stroke-width="1.25"/><path d="M5.9 0.6 V14.9" stroke="#d0d1d4" stroke-width="1.25"/><circle cx="2" cy="14.8" r="2.6" fill="#3b3e41" stroke="#3b3e41" stroke-width="2.8"/><circle cx="2" cy="14.8" r="2.4" fill="none" stroke="#d0d1d4" stroke-width="1.25"/></g><text class="nm" transform="translate(620.00 819.10) scale(1 1.06)">id</text><text class="ty" text-anchor="end" transform="translate(700.50 819.10) scale(1 1.06)">integer</text><rect x="265.50" y="1173.80" width="351.50" height="174.80" fill="#3b3e41"/><rect x="265.50" y="1173.80" width="351.50" height="38.00" fill="#3c3c3d"/><rect x="265.5" y="1173.5" width="352" height="175" fill="none" stroke="#7e7e7e" stroke-width="1"/><path d="M265 1211.5 H617" stroke="#7e7e7e" stroke-width="1"/><g transform="translate(373.66 1184.50)"><rect x="0.6" y="0.6" width="16.8" height="14.4" rx="1.6" fill="#46484c" stroke="#d6d7dc" stroke-width="1.2"/><path d="M0.6 4.8 H17.4 M5.7 0.6 V15 M12.6 0.6 V15" stroke="#d6d7dc" stroke-width="1.2"/></g><text class="ti" transform="translate(400.16 1200.30) scale(1 1.04)">Populartiy</text><g transform="translate(272.50 1224.80)"><rect x="0.8" y="0.8" width="4.9" height="13.8" fill="#45464a"/><rect x="0.6" y="0.6" width="16.8" height="14.3" rx="1.8" fill="none" stroke="#d0d1d4" stroke-width="1.25"/><path d="M5.9 0.6 V14.9" stroke="#d0d1d4" stroke-width="1.25"/></g><text class="nm" transform="translate(296.50 1239.30) scale(1 1.06)">Timestamp</text><text class="ty" text-anchor="end" transform="translate(609.50 1239.30) scale(1 1.06)">text</text><g transform="translate(272.50 1255.90)"><rect x="0.8" y="0.8" width="4.9" height="13.8" fill="#45464a"/><rect x="0.6" y="0.6" width="16.8" height="14.3" rx="1.8" fill="none" stroke="#d0d1d4" stroke-width="1.25"/><path d="M5.9 0.6 V14.9" stroke="#d0d1d4" stroke-width="1.25"/></g><text class="nm" transform="translate(296.50 1270.40) scale(1 1.06)">Username</text><text class="ty" text-anchor="end" transform="translate(609.50 1270.40) scale(1 1.06)">text</text><g transform="translate(272.50 1287.00)"><rect x="0.8" y="0.8" width="4.9" height="13.8" fill="#45464a"/><rect x="0.6" y="0.6" width="16.8" height="14.3" rx="1.8" fill="none" stroke="#d0d1d4" stroke-width="1.25"/><path d="M5.9 0.6 V14.9" stroke="#d0d1d4" stroke-width="1.25"/></g><text class="nm" transform="translate(296.50 1301.50) scale(1 1.06)">General</text><text class="ty" text-anchor="end" transform="translate(609.50 1301.50) scale(1 1.06)">text</text><g transform="translate(272.50 1318.10)"><rect x="0.8" y="0.8" width="4.9" height="13.8" fill="#45464a"/><rect x="0.6" y="0.6" width="16.8" height="14.3" rx="1.8" fill="none" stroke="#d0d1d4" stroke-width="1.25"/><path d="M5.9 0.6 V14.9" stroke="#d0d1d4" stroke-width="1.25"/></g><text class="nm" transform="translate(296.50 1332.60) scale(1 1.06)">Software Development</text><text class="ty" text-anchor="end" transform="translate(609.50 1332.60) scale(1 1.06)">text</text><rect x="795.00" y="1266.40" width="227.00" height="113.60" fill="#3b3e41"/><rect x="795.00" y="1266.40" width="227.00" height="38.00" fill="#3c3c3d"/><rect x="795.5" y="1266.5" width="227" height="114" fill="none" stroke="#7e7e7e" stroke-width="1"/><path d="M795 1304.5 H1022" stroke="#7e7e7e" stroke-width="1"/><path d="M795 1342.5 H1022" stroke="#7e7e7e" stroke-width="1"/><g transform="translate(823.97 1277.10)"><rect x="0.6" y="0.6" width="16.8" height="14.4" rx="1.6" fill="#46484c" stroke="#d6d7dc" stroke-width="1.2"/><path d="M0.6 4.8 H17.4 M5.7 0.6 V15 M12.6 0.6 V15" stroke="#d6d7dc" stroke-width="1.2"/></g><text class="ti" transform="translate(850.47 1292.90) scale(1 1.04)">film_category</text><g transform="translate(802.00 1317.40)"><rect x="0.8" y="0.8" width="4.9" height="13.8" fill="#45464a"/><rect x="0.6" y="0.6" width="16.8" height="14.3" rx="1.8" fill="none" stroke="#d0d1d4" stroke-width="1.25"/><path d="M5.9 0.6 V14.9" stroke="#d0d1d4" stroke-width="1.25"/><circle cx="2" cy="14.8" r="2.6" fill="#3b3e41" stroke="#3b3e41" stroke-width="2.8"/><circle cx="2" cy="14.8" r="2.4" fill="none" stroke="#d0d1d4" stroke-width="1.25"/></g><text class="nm" transform="translate(826.00 1331.90) scale(1 1.06)">last_update</text><text class="ty" text-anchor="end" transform="translate(1014.50 1331.90) scale(1 1.06)">timestamp</text><rect x="1107.00" y="1157.90" width="173.00" height="205.90" fill="#3b3e41"/><rect x="1107.00" y="1157.90" width="173.00" height="38.00" fill="#3c3c3d"/><rect x="1107.5" y="1158.5" width="173" height="205" fill="none" stroke="#7e7e7e" stroke-width="1"/><path d="M1107 1196.5 H1280" stroke="#7e7e7e" stroke-width="1"/><g transform="translate(1161.50 1168.60)"><rect x="0.6" y="0.6" width="16.8" height="14.4" rx="1.6" fill="#46484c" stroke="#d6d7dc" stroke-width="1.2"/><path d="M0.6 4.8 H17.4 M5.7 0.6 V15 M12.6 0.6 V15" stroke="#d6d7dc" stroke-width="1.2"/></g><text class="ti" transform="translate(1188.00 1184.40) scale(1 1.04)">cfp</text><g transform="translate(1114.00 1208.90)"><rect x="0.8" y="0.8" width="4.9" height="13.8" fill="#45464a"/><rect x="0.6" y="0.6" width="16.8" height="14.3" rx="1.8" fill="none" stroke="#d0d1d4" stroke-width="1.25"/><path d="M5.9 0.6 V14.9" stroke="#d0d1d4" stroke-width="1.25"/></g><text class="nm" transform="translate(1138.00 1223.40) scale(1 1.06)">Timestamp</text><text class="ty" text-anchor="end" transform="translate(1272.50 1223.40) scale(1 1.06)">text</text><g transform="translate(1114.00 1240.00)"><rect x="0.8" y="0.8" width="4.9" height="13.8" fill="#45464a"/><rect x="0.6" y="0.6" width="16.8" height="14.3" rx="1.8" fill="none" stroke="#d0d1d4" stroke-width="1.25"/><path d="M5.9 0.6 V14.9" stroke="#d0d1d4" stroke-width="1.25"/></g><text class="nm" transform="translate(1138.00 1254.50) scale(1 1.06)">Username</text><text class="ty" text-anchor="end" transform="translate(1272.50 1254.50) scale(1 1.06)">text</text><g transform="translate(1114.00 1271.10)"><rect x="0.8" y="0.8" width="4.9" height="13.8" fill="#45464a"/><rect x="0.6" y="0.6" width="16.8" height="14.3" rx="1.8" fill="none" stroke="#d0d1d4" stroke-width="1.25"/><path d="M5.9 0.6 V14.9" stroke="#d0d1d4" stroke-width="1.25"/></g><text class="nm" transform="translate(1138.00 1285.60) scale(1 1.06)">Name</text><text class="ty" text-anchor="end" transform="translate(1272.50 1285.60) scale(1 1.06)">text</text><g transform="translate(1114.00 1302.20)"><rect x="0.8" y="0.8" width="4.9" height="13.8" fill="#45464a"/><rect x="0.6" y="0.6" width="16.8" height="14.3" rx="1.8" fill="none" stroke="#d0d1d4" stroke-width="1.25"/><path d="M5.9 0.6 V14.9" stroke="#d0d1d4" stroke-width="1.25"/></g><text class="nm" transform="translate(1138.00 1316.70) scale(1 1.06)">Topic</text><text class="ty" text-anchor="end" transform="translate(1272.50 1316.70) scale(1 1.06)">text</text><g transform="translate(1114.00 1333.30)"><rect x="0.8" y="0.8" width="4.9" height="13.8" fill="#45464a"/><rect x="0.6" y="0.6" width="16.8" height="14.3" rx="1.8" fill="none" stroke="#d0d1d4" stroke-width="1.25"/><path d="M5.9 0.6 V14.9" stroke="#d0d1d4" stroke-width="1.25"/></g><text class="nm" transform="translate(1138.00 1347.80) scale(1 1.06)">Type</text><text class="ty" text-anchor="end" transform="translate(1272.50 1347.80) scale(1 1.06)">text</text></g><g clip-path="url(#cv)">
<g><text class="lb" x="894.50" y="151.00">manager_staff_id:staff_id</text><text class="lb" x="1106.50" y="62.00">store_id</text><text class="lb" x="1237.50" y="42.40">address_id</text><text class="lb" x="597.00" y="993.20">film_id</text><text class="lb" x="597.00" y="1032.60">film_id</text><text class="lb" x="556.00" y="1098.00">film_id</text><text class="lb" x="877.30" y="1085.00">category_id</text><text class="lb" x="1001.50" y="1124.80">store_id</text><text class="lb" x="1267.00" y="876.80">staff_id</text><text class="lb" x="1422.00" y="967.70">staff_id</text><text class="lb" x="1370.30" y="1239.70">staff_id</text></g>
<text class="wm" transform="translate(3.6 1320) scale(1 1.1)" style="word-spacing:3px">d by yFiles</text>
</g>
</svg></body></html>
